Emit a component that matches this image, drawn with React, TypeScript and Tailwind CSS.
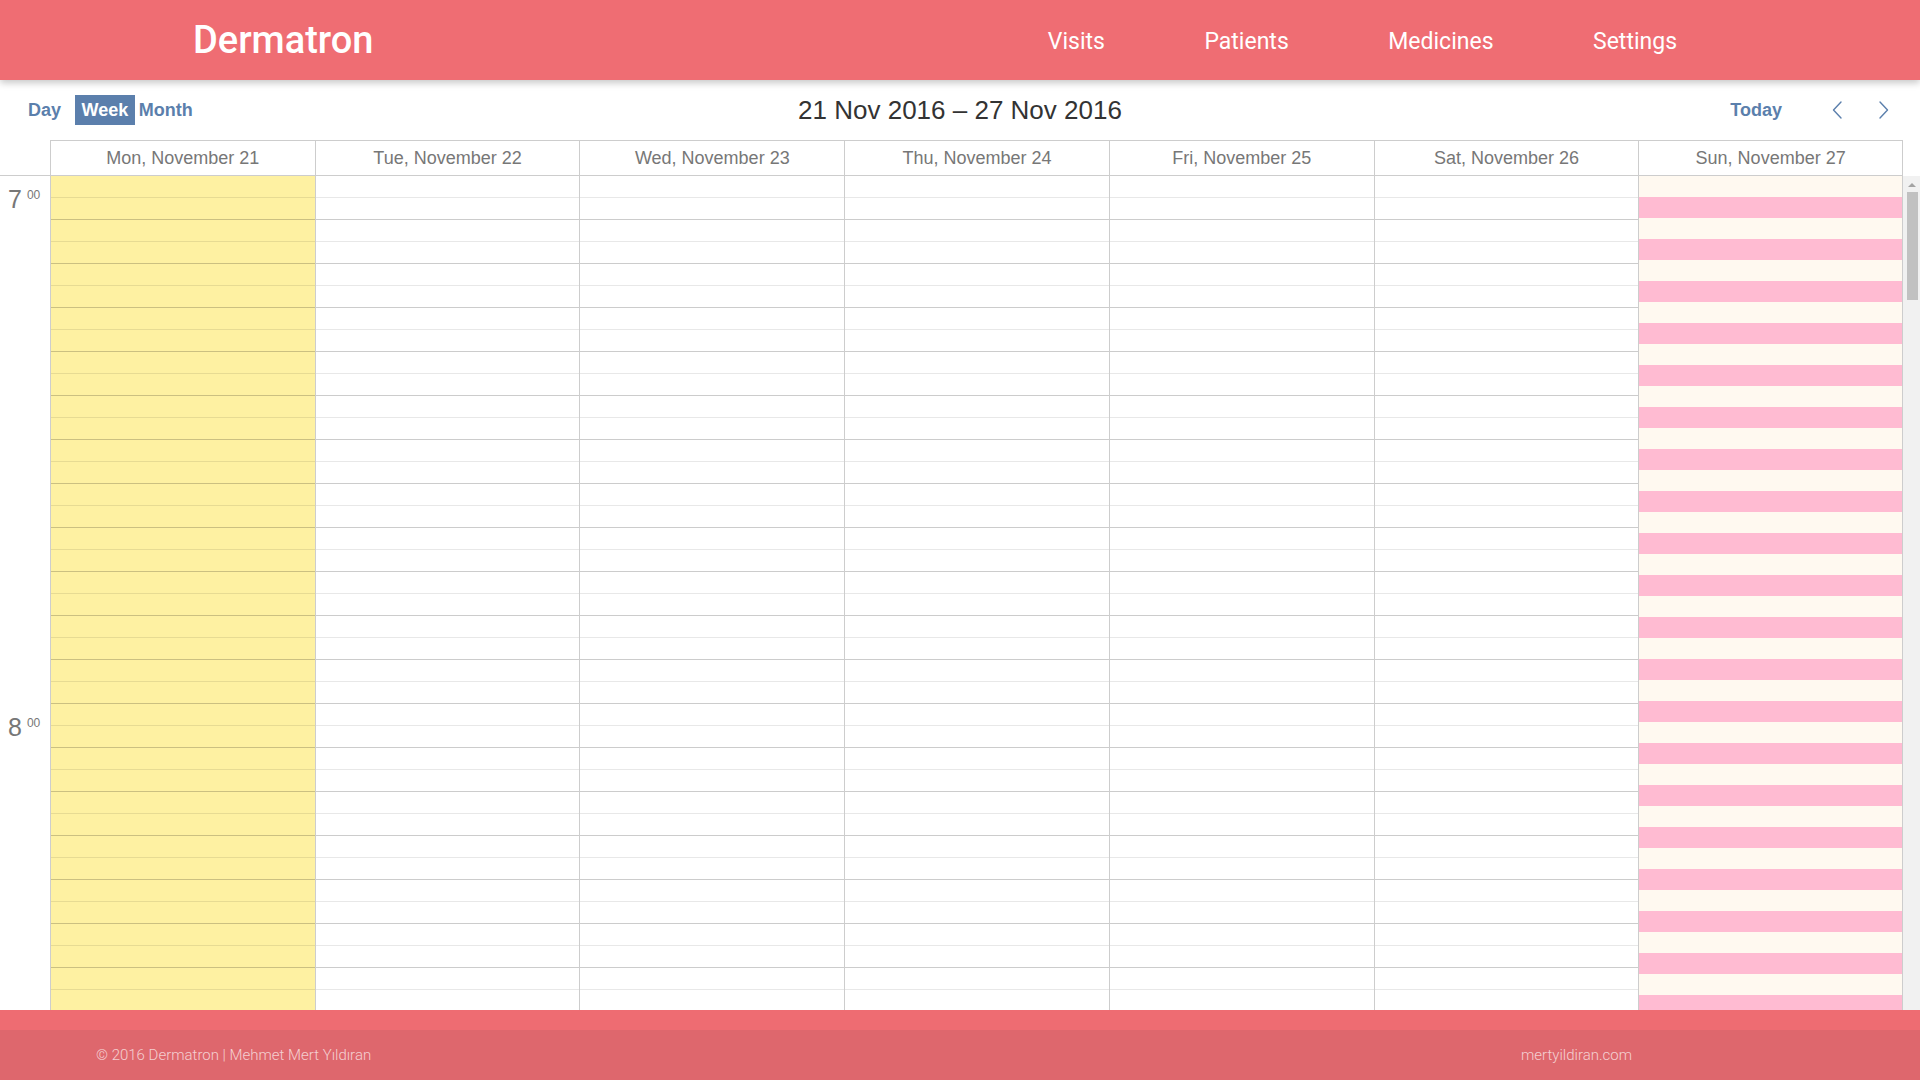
import React from "react";

const days = [
  "Mon, November 21",
  "Tue, November 22",
  "Wed, November 23",
  "Thu, November 24",
  "Fri, November 25",
  "Sat, November 26",
  "Sun, November 27",
];

const ROWS = 48;

function Rows() {
  return (
    <>
      {Array.from({ length: ROWS }).map((_, i) => (
        <div
          key={i}
          className={
            i % 2 === 0
              ? "h-[22px] border-b border-[rgba(0,0,0,0.09)]"
              : "h-[22px] border-b border-[rgba(0,0,0,0.2)]"
          }
        />
      ))}
    </>
  );
}

function Chevron({ dir }: { dir: "left" | "right" }) {
  return (
    <svg width="10" height="18" viewBox="0 0 10 18" fill="none">
      <polyline
        points={dir === "left" ? "9,1 1.5,9 9,17" : "1,1 8.5,9 1,17"}
        stroke="#5b7fac"
        strokeWidth="1.4"
        strokeLinecap="round"
        strokeLinejoin="round"
      />
    </svg>
  );
}

function HourLabel({ h }: { h: string }) {
  return (
    <div className="h-[528px] pl-[8px] pt-[11px] flex items-start text-[#777]">
      <span className="text-[25px] leading-none">{h}</span>
      <span className="text-[12px] leading-none ml-[5px] mt-[2px]">00</span>
    </div>
  );
}

export default function App() {
  return (
    <div className="h-screen w-full flex flex-col overflow-hidden bg-white font-['Liberation_Sans',Arial,sans-serif]">
      {/* Header */}
      <header className="relative z-10 h-[80px] shrink-0 bg-[#ef6d73] shadow-[0_3px_7px_rgba(0,0,0,0.22)] flex items-center pl-[193px] font-['Roboto',sans-serif] text-white">
        <div className="text-[38px] font-medium leading-none">Dermatron</div>
        <nav className="ml-auto mt-[2px] flex items-center gap-[99.5px] pr-[243px] text-[23px] leading-none">
          <span>Visits</span>
          <span>Patients</span>
          <span>Medicines</span>
          <span>Settings</span>
        </nav>
      </header>

      {/* Toolbar */}
      <div className="h-[60px] shrink-0 grid grid-cols-[1fr_auto_1fr] items-center">
        <div className="flex items-center pl-[28px] text-[18px] font-bold text-[#5b7fac]">
          <span className="leading-none">Day</span>
          <span className="ml-[14px] h-[30px] px-[6.5px] flex items-center bg-[#5b7fac] text-white leading-none">
            Week
          </span>
          <span className="ml-[4px] leading-none">Month</span>
        </div>
        <div className="text-[26px] text-[#333] leading-none">21 Nov 2016 – 27 Nov 2016</div>
        <div className="flex items-center justify-end pr-[31px] text-[18px] font-bold text-[#5b7fac]">
          <span className="leading-none">Today</span>
          <span className="ml-[50px] flex">
            <Chevron dir="left" />
          </span>
          <span className="ml-[37px] flex">
            <Chevron dir="right" />
          </span>
        </div>
      </div>

      {/* Calendar */}
      <div className="flex-1 min-h-0 flex flex-col">
        <div className="flex h-[36px] shrink-0">
          <div className="flex-1 grid grid-cols-[50px_repeat(7,1fr)] border-b border-[#cdcdcd]">
            <div />
            {days.map((d, i) => (
              <div
                key={d}
                className={
                  i === 6
                    ? "border-l border-t border-r border-[#cdcdcd] flex items-center justify-center text-[18px] text-[#777]"
                    : "border-l border-t border-[#cdcdcd] flex items-center justify-center text-[18px] text-[#777]"
                }
              >
                {d}
              </div>
            ))}
          </div>
          <div className="w-[17px] shrink-0" />
        </div>

        <div className="flex-1 min-h-0 flex overflow-hidden">
          <div className="flex-1 grid grid-cols-[50px_repeat(7,1fr)] items-start overflow-hidden">
            <div>
              <HourLabel h="7" />
              <HourLabel h="8" />
            </div>
            {/* Monday - today */}
            <div className="border-l border-[#cdcdcd] bg-[#fef1a2]">
              <Rows />
            </div>
            {[1, 2, 3, 4, 5].map((k) => (
              <div key={k} className="border-l border-[#cdcdcd]">
                <Rows />
              </div>
            ))}
            {/* Sunday - striped */}
            <div className="border-l border-r border-[#cdcdcd] h-[1056px] bg-[repeating-linear-gradient(180deg,#fff9f0_0px,#fff9f0_21px,#ffbbd2_21px,#ffbbd2_42px)]" />
          </div>
          {/* Scrollbar */}
          <div className="w-[17px] shrink-0 bg-[#f1f1f1] flex flex-col">
            <div className="mt-[7px] ml-[5px] w-0 h-0 border-l-[4px] border-r-[4px] border-b-[4px] border-l-transparent border-r-transparent border-b-[#a3a3a3]" />
            <div className="mt-[5px] ml-[4px] w-[11px] h-[108px] bg-[#c1c1c1]" />
          </div>
        </div>
      </div>

      {/* Footer */}
      <footer className="h-[70px] shrink-0 flex flex-col font-['Roboto',sans-serif]">
        <div className="h-[20px] bg-[#ee6c72]" />
        <div className="flex-1 bg-[#de676d] flex items-center justify-between pl-[96px] pr-[288px] text-[15px] font-light text-white/70">
          <span>© 2016 Dermatron | Mehmet Mert Yıldıran</span>
          <span>mertyildiran.com</span>
        </div>
      </footer>
    </div>
  );
}
